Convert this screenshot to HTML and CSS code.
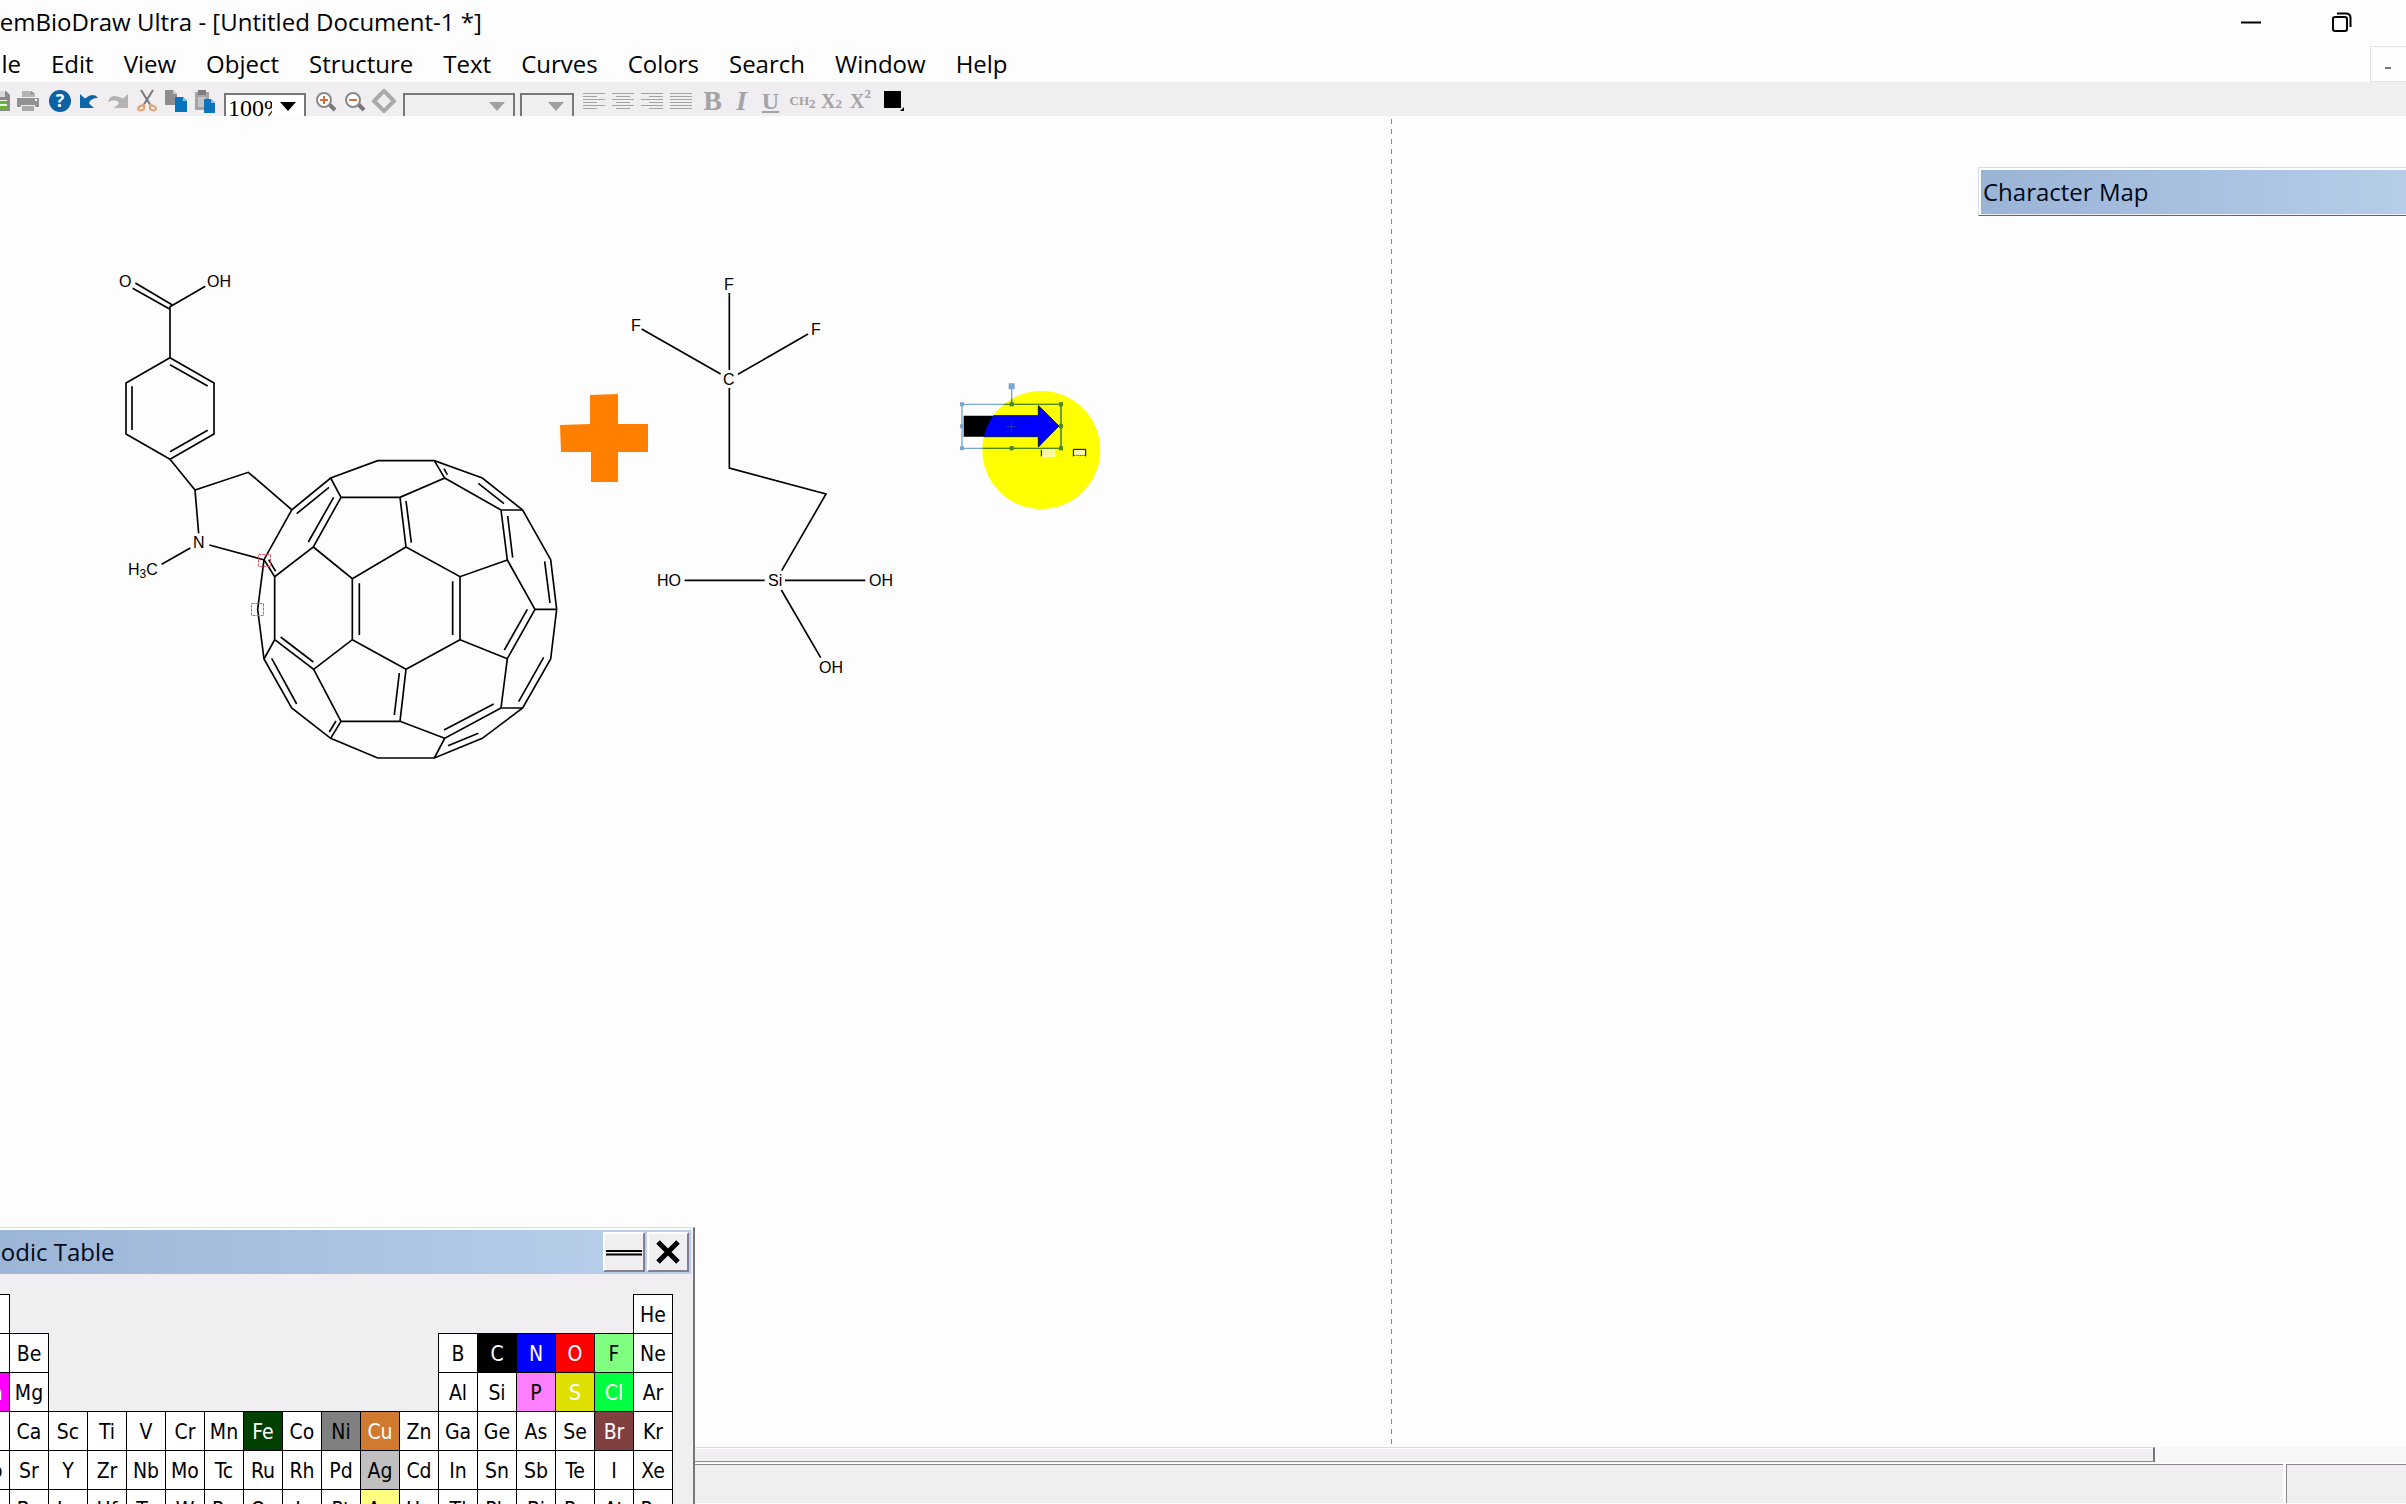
FILE: index.html
```html
<!DOCTYPE html>
<html lang="en">
<head>
    <meta charset="UTF-8">
    <meta name="viewport" content="width=device-width, initial-scale=1.0">
    <title>ChemBioDraw Ultra - [Untitled Document-1 *]</title>
    <link rel="stylesheet" href="styles.css">
</head>
<body>
    <header class="titlebar">
        <h1 class="app-title">ChemBioDraw Ultra - [Untitled Document-1 *]</h1>
        <div class="window-buttons">
            <button type="button" aria-label="Minimize"><svg width="24" height="24"><path d="M2 12.500H22" stroke="#000" stroke-width="2"/></svg></button>
            <button type="button" aria-label="Restore"><svg width="24" height="24" fill="none" stroke="#000" stroke-width="2"><rect x="3" y="7" width="14" height="14" rx="2"/><path d="M7 3.500H16Q20.500 3.500 20.500 8V17"/></svg></button>
            <button type="button" aria-label="Close"><svg width="24" height="24"><path d="M3 3L21 21M21 3L3 21" stroke="#000" stroke-width="2"/></svg></button>
        </div>
    </header>

    <nav class="menubar">
        <button type="button">File</button>
        <button type="button">Edit</button>
        <button type="button">View</button>
        <button type="button">Object</button>
        <button type="button">Structure</button>
        <button type="button">Text</button>
        <button type="button">Curves</button>
        <button type="button">Colors</button>
        <button type="button">Search</button>
        <button type="button">Window</button>
        <button type="button">Help</button>
        <button type="button" class="doc-minimize" aria-label="Minimize document"><svg width="6" height="2"><path d="M0 1H6" stroke="#777" stroke-width="2"/></svg></button>
    </nav>

    <div class="toolbar">
        <div class="tool-group file-tools">
            <button type="button" aria-label="Save">
                <svg width="24" height="24"><path d="M1 2H19L23 6V22H1Z" fill="#8a8a8c"/><path d="M6 2H18V8H6Z" fill="#d8d8da"/><path d="M4 11H20V20H4Z" fill="#e8f2e0"/><path d="M4 12H20V15H4ZM4 17H20V20H4Z" fill="#6cae3c"/></svg>
            </button>
            <button type="button" aria-label="Print">
                <svg width="24" height="24"><path d="M6 2H15L19 5V8H6Z" fill="#b4b4b6"/><path d="M15 2V5H19" fill="#8d8d8f"/><path d="M1 9H23V18H19V16H5V18H1Z" fill="#929294"/><path d="M19 10H21V12H19Z" fill="#eee"/><path d="M6 17H18V22H6Z" fill="#a9a9ab"/></svg>
            </button>
        </div>
        <div class="tool-group">
            <button type="button" aria-label="Help">
                <svg width="24" height="24"><circle cx="12" cy="12" r="11" fill="#0c62a3"/><text class="help-mark" x="12" y="18" text-anchor="middle">?</text></svg>
            </button>
            <button type="button" aria-label="Undo">
                <svg width="24" height="24"><path d="M3 5V19H17L12 14.500Q13 9 21 9Q17 3 8 9.500Z" fill="#0e66a8"/></svg>
            </button>
            <button type="button" aria-label="Redo">
                <svg width="24" height="24"><path d="M22 5V19H8L13 14.500Q11 9 2 13Q4 3 17 9.500Z" fill="#b3b2b5"/></svg>
            </button>
            <button type="button" aria-label="Cut">
                <svg width="24" height="24" fill="none"><path d="M6 1L16 17M18 1L8 17" stroke="#77777a" stroke-width="2"/><path d="M9 16Q3 17 3 20Q5 23 9 20ZM15 16Q21 17 21 20Q19 23 15 20Z" stroke="#e0a070" stroke-width="2"/></svg>
            </button>
            <button type="button" aria-label="Copy">
                <svg width="24" height="24"><path d="M1 1H9L13 5V16H1Z" fill="#8e8e90"/><path d="M9 1V5H13" fill="#c9c9cb"/><path d="M11 8H19L23 12V23H11Z" fill="#0b73b9"/><path d="M19 8V12H23" fill="#8fc4e6"/></svg>
            </button>
            <button type="button" aria-label="Paste">
                <svg width="24" height="24"><path d="M2 3H16V21H2Z" fill="#a4a4a6"/><path d="M5 1H13V6H5Z" fill="#7e7e80"/><path d="M5 8H13V18H5Z" fill="#c4c4c6"/><path d="M11 10H18L22 14V24H11Z" fill="#0b73b9"/><path d="M18 10V14H22" fill="#8fc4e6"/></svg>
            </button>
        </div>
        <div class="combo combo-zoom">
            <select aria-label="Zoom"><option>100%</option><option>200%</option></select>
            <svg class="arrow" width="16" height="9"><path d="M0 0H16L8 9Z" fill="#000"/></svg>
        </div>
        <div class="tool-group">
            <button type="button" aria-label="Zoom in">
                <svg width="24" height="24"><path d="M14 14L21 21" stroke="#77777a" stroke-width="4"/><circle cx="10" cy="11" r="7" fill="#fff" stroke="#8a888b" stroke-width="2"/><path d="M6 11H14M10 7V15" stroke="#d5703c" stroke-width="2"/></svg>
            </button>
            <button type="button" aria-label="Zoom out">
                <svg width="24" height="24"><path d="M14 14L21 21" stroke="#77777a" stroke-width="4"/><circle cx="10" cy="11" r="7" fill="#fff" stroke="#8a888b" stroke-width="2"/><path d="M6 11H14" stroke="#d5703c" stroke-width="2"/></svg>
            </button>
            <button type="button" aria-label="Clean up">
                <svg width="24" height="24"><path d="M12 2L22 12L12 22L2 12Z" fill="none" stroke="#aaa9ac" stroke-width="4" stroke-linejoin="round"/></svg>
            </button>
        </div>
        <div class="combo combo-font">
            <select aria-label="Font" disabled></select>
            <svg class="arrow" width="16" height="9"><path d="M0 0H16L8 9Z" fill="#a09fa2"/></svg>
        </div>
        <div class="combo combo-size">
            <select aria-label="Font size" disabled></select>
            <svg class="arrow" width="16" height="9"><path d="M0 0H16L8 9Z" fill="#a09fa2"/></svg>
        </div>
        <div class="tool-group text-tools">
            <button type="button" aria-label="Align left"><svg width="24" height="24" stroke="#a4a3a6" stroke-width="1"><path d="M1 4.500H23M1 7.500H15M1 10.500H23M1 13.500H15M1 16.500H23M1 19.500H15"/></svg></button>
            <button type="button" aria-label="Align center"><svg width="24" height="24" stroke="#a4a3a6" stroke-width="1"><path d="M1 4.500H23M5 7.500H19M1 10.500H23M5 13.500H19M1 16.500H23M5 19.500H19"/></svg></button>
            <button type="button" aria-label="Align right"><svg width="24" height="24" stroke="#a4a3a6" stroke-width="1"><path d="M1 4.500H23M9 7.500H23M1 10.500H23M9 13.500H23M1 16.500H23M9 19.500H23"/></svg></button>
            <button type="button" aria-label="Justify"><svg width="24" height="24" stroke="#a4a3a6" stroke-width="1"><path d="M1 4.500H23M1 7.500H23M1 10.500H23M1 13.500H23M1 16.500H23M1 19.500H23"/></svg></button>
        </div>
        <div class="tool-group text-tools">
            <button type="button" class="bold">B</button>
            <button type="button" class="italic">I</button>
            <button type="button" class="underline">U</button>
        </div>
        <div class="tool-group text-tools">
            <button type="button" class="formula">CH<sub>2</sub></button>
            <button type="button" class="script">X<sub>2</sub></button>
            <button type="button" class="script">X<sup>2</sup></button>
        </div>
        <div class="tool-group text-tools">
            <button type="button" aria-label="Color"><svg width="24" height="24"><path d="M3 2H20V19H3ZM23 18V22H19Z"/></svg></button>
        </div>
    </div>

    <main class="workspace">
        <svg class="drawing" width="100%" height="100%">
            <defs>
                <clipPath id="spot"><circle cx="364" cy="270" r="177"/></clipPath>
                <g id="selection">
                    <path d="M126 133H423V265H126ZM275 80V133" fill="none" stroke-width="4"/>
                    <path d="M120 127h12v12h-12zM269 127h12v12h-12zM417 127h12v12h-12zM120 193h12v12h-12zM417 193h12v12h-12zM120 259h12v12h-12zM269 259h12v12h-12zM417 259h12v12h-12zM266 70h18v18h-18z" stroke="none"/>
                </g>
            </defs>

            <!-- page edge -->
            <line class="page-edge" x1="1391.500" y1="2" x2="1391.500" y2="100%"/>

            <!-- benzoic acid and pyrrolidine ring -->
            <g class="bonds" transform="translate(90 133) scale(.33333)">
                <path d="M136 99L246 164M128 115L240 178M240 170L346 109M240 167V323"/>
                <path d="M240 323L372 399V552L240 628L108 552V399ZM240 344L353 408M126 409V540M240 605L353 541"/>
                <path d="M240 628L315 720L475 667L605 779M315 720L326 850M301 894L215 943M358 885L523 930"/>
            </g>

            <!-- fullerene cage -->
            <g class="bonds" transform="translate(240 323) scale(.33333)">
                <path d="M155 210L272 114L413 62H583L727 114L848 210L932 359L950 508L932 657L848 804L727 895L583 954H413L272 895L155 804L72 657L53 508L72 359Z"/>
                <path d="M272 114L303 172H480L614 114L583 62M614 114L783 210H848M783 210L802 360L885 508H950M885 508L802 656L783 804H848M783 804L614 895L583 954M614 895L480 844H303L272 895"/>
                <path d="M303 172L220 321L104 410L72 359M104 410V599L72 657M104 599L221 688L303 844"/>
                <path d="M220 321L337 416L498 321L480 172M498 321L660 410L802 360M660 410V599L802 656M660 599L498 688L480 844M498 688L337 599L221 688M337 599V416"/>
                <path d="M170 221L267 142M281 172L205 306M86 359L107 394M612 86L622 104M715 130L792 191M803 228L818 353M914 364L930 489M862 508L793 630M911 652L836 785M761 792L612 870M715 880L624 917M498 183L514 308M358 430V585M638 424V585M478 699L463 825M122 591L220 666M95 655L170 792M288 843L268 876"/>
            </g>
            <g class="warnings">
                <rect x="258.500" y="437.500" width="12" height="12"/>
                <rect x="251.500" y="486.500" width="12" height="12"/>
            </g>

            <path fill="#ff8000" d="M590 278L618 277V307H648V335H618V365H591V335H561L560 308L590 307Z"/>

            <!-- trifluoropropyl silanetriol -->
            <g class="bonds" transform="translate(540 143) scale(.33333)">
                <path d="M568 99V330M305 207L542 342M594 343L804 222M568 384V624L858 702L725 932M434 961H674M735 961H976M724 990L842 1193"/>
            </g>

            <g class="atoms">
                <text x="119" y="170">O</text>
                <text x="207" y="170">OH</text>
                <text x="193" y="431">N</text>
                <text x="128" y="458">H<tspan class="count" dy="3">3</tspan><tspan dy="-3">C</tspan></text>
                <text x="724" y="173">F</text>
                <text x="631" y="214">F</text>
                <text x="811" y="218">F</text>
                <text x="723" y="268">C</text>
                <text x="768" y="469">Si</text>
                <text x="657" y="469">HO</text>
                <text x="869" y="469">OH</text>
                <text x="819" y="556">OH</text>
            </g>

            <!-- selected reaction arrow under the pointer highlight -->
            <g transform="translate(920 243) scale(.33333)">
                <circle cx="364" cy="270" r="177" fill="#ff0"/>
                <path d="M131 167H355V137L417 198L355 261V230H131Z"/>
                <use href="#selection" fill="#7aa6cf" stroke="#7aa6cf"/>
                <g clip-path="url(#spot)">
                    <path fill="#00f" stroke="#002060" stroke-width="3" d="M100 167H355V137L417 198L355 261V230H100Z"/>
                    <use href="#selection" fill="#4c8c14" stroke="#4c8c14"/>
                </g>
                <path d="M260 200H290M275 185V215" stroke="#1c3f9c" stroke-width="3"/>
                <path d="M366 268H405V291H366Z" fill="#ffffa8"/>
                <path d="M364 270V289" stroke="#000" stroke-width="3"/>
                <path d="M370 273H395V284H370Z" fill="none" stroke="#e6e65a" stroke-width="3" stroke-dasharray="3 3"/>
                <path d="M460 269H497V288H460Z" fill="#ffffa8"/>
                <path d="M460 289V268H497V289" fill="none" stroke="#000" stroke-width="3"/>
                <path d="M461 286H497" stroke="#000" stroke-width="3" stroke-dasharray="3 3"/>
            </g>
        </svg>

        <section class="palette character-map">
            <div class="palette-title"><h2>Character Map</h2></div>
        </section>
    </main>

    <footer>
        <div class="scrollbar"><div class="thumb"></div></div>
        <div class="statusbar">
            <div class="panel message"></div>
            <div class="panel"></div>
        </div>
    </footer>

    <section class="palette periodic">
        <div class="palette-title">
            <h2>Periodic Table</h2>
            <button type="button" aria-label="Collapse"><svg width="36" height="24"><path d="M0 11H36M0 14.500H36" stroke="#000" stroke-width="2"/></svg></button>
            <button type="button" aria-label="Close"><svg width="24" height="24"><path d="M2 2L22 22M22 2L2 22" stroke="#000" stroke-width="5"/></svg></button>
        </div>
        <table class="elements">
            <colgroup><col span="18"></colgroup>
            <tr><td>H</td><td class="gap" colspan="16"></td><td>He</td></tr>
            <tr><td>Li</td><td>Be</td><td class="gap" colspan="10"></td><td>B</td><td class="c">C</td><td class="n">N</td><td class="o">O</td><td class="f">F</td><td>Ne</td></tr>
            <tr><td class="na">Na</td><td>Mg</td><td class="gap" colspan="10"></td><td>Al</td><td>Si</td><td class="p">P</td><td class="s">S</td><td class="cl">Cl</td><td>Ar</td></tr>
            <tr><td>K</td><td>Ca</td><td>Sc</td><td>Ti</td><td>V</td><td>Cr</td><td>Mn</td><td class="fe">Fe</td><td>Co</td><td class="ni">Ni</td><td class="cu">Cu</td><td>Zn</td><td>Ga</td><td>Ge</td><td>As</td><td>Se</td><td class="br">Br</td><td>Kr</td></tr>
            <tr><td>Rb</td><td>Sr</td><td>Y</td><td>Zr</td><td>Nb</td><td>Mo</td><td>Tc</td><td>Ru</td><td>Rh</td><td>Pd</td><td class="ag">Ag</td><td>Cd</td><td>In</td><td>Sn</td><td>Sb</td><td>Te</td><td>I</td><td>Xe</td></tr>
            <tr><td>Cs</td><td>Ba</td><td>La</td><td>Hf</td><td>Ta</td><td>W</td><td>Re</td><td>Os</td><td>Ir</td><td>Pt</td><td class="au">Au</td><td>Hg</td><td>Tl</td><td>Pb</td><td>Bi</td><td>Po</td><td>At</td><td>Rn</td></tr>
        </table>
    </section>
</body>
</html>
```

FILE: styles.css
```css
* {
    box-sizing: border-box;
}

body {
    margin: 0;
    height: 100vh;
    padding-bottom: 1px;
    display: flex;
    flex-direction: column;
    position: relative;
    overflow: hidden;
    background: #fdfdfd;
    color: #000;
    font-family: "Open Sans", "Noto Sans", sans-serif;
    font-size: 24px;
}

button {
    margin: 0;
    padding: 0;
    border: 0;
    background: none;
    color: inherit;
    font: inherit;
}

svg {
    display: block;
}

h1, h2 {
    margin: 0;
    padding-bottom: 2px;
    font-size: 24px;
    font-weight: normal;
    white-space: nowrap;
}

/* Title bar and menu */
.titlebar {
    display: flex;
    justify-content: space-between;
    align-items: center;
    height: 46px;
    flex: none;
    padding-bottom: 2px;
}

.app-title {
    margin-left: -30px;
}

.window-buttons {
    display: flex;
    margin-right: -72px;
}

.window-buttons button {
    display: flex;
    justify-content: center;
    width: 91px;
}

.menubar {
    display: flex;
    height: 36px;
    flex: none;
    margin-left: -32px;
}

.menubar button {
    padding: 0 15px 2px;
}

.menubar .doc-minimize {
    width: 36px;
    margin-left: auto;
    border: 1px solid #e4e2e5;
    border-right: 0;
    padding: 8px 0 0 14px;
}

/* Toolbar */
.toolbar {
    display: flex;
    height: 34px;
    flex: none;
    padding-top: 7px;
    background: #f0eef1;
    overflow: hidden;
}

.tool-group {
    display: flex;
    margin-right: 5px;
}

.tool-group button {
    width: 29px;
    height: 24px;
    display: flex;
    justify-content: center;
}

.file-tools {
    margin: 0 3px 0 -16px;
}

.text-tools {
    margin-right: 3px;
    color: #a3a2a5;
    font-family: "Liberation Serif", serif;
}

.text-tools button {
    line-height: 24px;
}

.help-mark {
    fill: #fff;
    font-size: 18px;
    font-weight: bold;
}

.bold, .italic {
    font-size: 28px;
    font-weight: bold;
}

.italic {
    font-style: italic;
}

.underline {
    font-weight: bold;
    text-decoration: underline;
}

.formula {
    font-size: 13px;
    font-weight: bold;
}

.script {
    font-size: 20px;
    font-weight: bold;
}

.script sub, .script sup {
    font-size: 13px;
    line-height: 24px;
}

.script sub, .formula sub {
    margin-top: 3px;
    font-size: 13px;
}

.script sup {
    margin-top: -7px;
}

.combo {
    position: relative;
    flex: none;
    height: 32px;
    margin: 1px 5px 0 0;
}

.combo select {
    appearance: none;
    width: 100%;
    height: 100%;
    margin: 0;
    padding: 0 32px 2px 2px;
    border: 2px solid #79777a;
    border-radius: 0;
    background: #fff;
    color: #000;
    font: 24px "Liberation Serif", serif;
    opacity: 1;
}

.combo select:disabled {
    background: #f0eef1;
}

.combo .arrow {
    position: absolute;
    right: 10px;
    top: 12px;
}

.combo-zoom {
    width: 82px;
}

.combo-font {
    width: 112px;
}

.combo-size {
    width: 54px;
}

/* Document */
.workspace {
    position: relative;
    flex: 1;
    min-height: 0;
    margin-top: 1px;
    overflow: hidden;
}

.page-edge {
    stroke: #8a8a8a;
    stroke-width: 1;
    stroke-dasharray: 5 5;
}

.bonds {
    fill: none;
    stroke: #000;
    stroke-width: 5;
}

.atoms {
    font-family: "Liberation Sans", sans-serif;
    font-size: 16px;
}

.atoms .count {
    font-size: 12px;
}

.warnings {
    fill: none;
    stroke: #dc5a6a;
    stroke-width: 1;
    stroke-dasharray: 3 1;
}

/* Floating palettes */
.palette {
    position: absolute;
    overflow: hidden;
    border: 1px solid #d5dfe8;
    background: #f0eef1;
    box-shadow: inset 2px 2px #fff;
}

.palette-title {
    display: flex;
    align-items: center;
    height: 44px;
    margin: 2px 2px 1px;
    padding: 0 2px;
    background: linear-gradient(to right, #9ab4d6, #bad0ec);
    color: #000818;
}

.palette-title h2 {
    flex: 1;
}

.palette-title button {
    display: flex;
    align-items: center;
    justify-content: center;
    width: 42px;
    height: 40px;
    margin-left: 2px;
    border: 2px solid;
    border-color: #fff #808090 #808090 #fff;
    background: #f0eef1;
}

.character-map {
    top: 50px;
    right: -60px;
    width: 488px;
    border-bottom-color: #66646c;
}

.periodic {
    left: -48px;
    bottom: 0;
    width: 743px;
    height: 277px;
    border-right: 2px solid #77757a;
    border-bottom: 0;
}

.elements {
    table-layout: fixed;
    width: 703px;
    margin: 20px 0 0 17px;
    border-collapse: collapse;
    font-family: "DejaVu Sans Condensed", "Noto Sans", sans-serif;
    font-size: 21px;
    text-align: center;
}

.elements tr {
    height: 39px;
}

.elements td {
    padding: 2px 0 0;
    border: 1px solid #000;
    background: #fff;
    line-height: 24px;
}

.elements .gap {
    border: 0;
    background: none;
}

.elements .c { background: #000; color: #fff; }
.elements .n { background: #00f; color: #fff; }
.elements .o { background: #f00; color: #fff; }
.elements .f { background: #80ff80; }
.elements .na { background: #f0f; color: #fff; }
.elements .p { background: #ff80ff; }
.elements .s { background: #e0e000; color: #fff; }
.elements .cl { background: #00ff40; color: #fff; }
.elements .fe { background: #004000; color: #fff; }
.elements .ni { background: #808080; }
.elements .cu { background: #d07a30; color: #fff; }
.elements .br { background: #804040; color: #fff; }
.elements .ag { background: #c0c0c0; }
.elements .au { background: #ffff80; }

/* Scroll bar and status bar */
footer {
    flex: none;
}

.scrollbar {
    height: 16px;
    margin-bottom: 1px;
    background: #f8f7f8;
}

.thumb {
    width: calc(100% - 251px);
    height: 15px;
    border: 1px solid #dddbde;
    border-right: 2px solid #77757a;
    border-bottom-color: #8c8a8e;
    background: #f0eef1;
    box-shadow: inset 0 1px #fff;
}

.statusbar {
    display: flex;
    gap: 3px;
    height: 39px;
}

.panel {
    width: 120px;
    border-top: 1px solid #8c8a8e;
    border-left: 1px solid #8c8a8e;
    background: #f0eef1;
}

.message {
    flex: 1;
}
```
